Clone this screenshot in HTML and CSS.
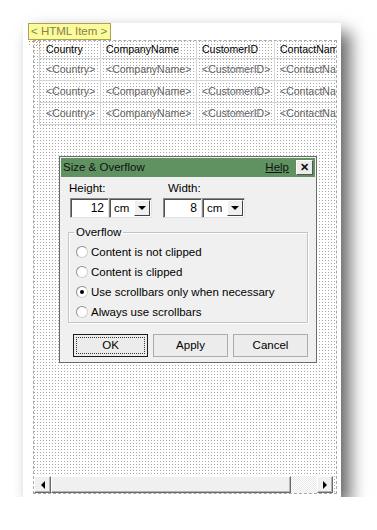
FILE: index.html
```html
<!DOCTYPE html>
<html>
<head>
<meta charset="utf-8">
<link rel="stylesheet" href="styles.css">
</head>
<body>
<div class="stage">
  <div class="card">
    <div class="tag">&lt; HTML Item &gt;</div>
    <svg class="handle" width="16" height="10" viewBox="0 0 16 10">
      <rect x="1" y="1" width="1" height="1"/><rect x="4" y="1" width="1" height="1"/><rect x="1" y="4" width="1" height="1"/>
      <rect x="8" y="2" width="1" height="1"/><rect x="11" y="2" width="1" height="1"/><rect x="11" y="5" width="1" height="1"/><rect x="11" y="8" width="1" height="1"/><rect x="8" y="5" width="1" height="1"/>
    </svg>
    <div class="frame">
      <table class="grid">
        <colgroup><col class="c1"><col class="c2"><col class="c3"><col class="c4"></colgroup>
        <tr class="head"><td>Country</td><td>CompanyName</td><td>CustomerID</td><td>ContactName</td></tr>
        <tr><td>&lt;Country&gt;</td><td>&lt;CompanyName&gt;</td><td>&lt;CustomerID&gt;</td><td>&lt;ContactName&gt;</td></tr>
        <tr><td>&lt;Country&gt;</td><td>&lt;CompanyName&gt;</td><td>&lt;CustomerID&gt;</td><td>&lt;ContactName&gt;</td></tr>
        <tr><td>&lt;Country&gt;</td><td>&lt;CompanyName&gt;</td><td>&lt;CustomerID&gt;</td><td>&lt;ContactName&gt;</td></tr>
      </table>

      <div class="dialog">
        <div class="titlebar">
          <span class="title">Size &amp; Overflow</span>
          <span class="help">Help</span>
          <span class="close">&#x2715;</span>
        </div>
        <div class="dbody">
          <div class="sizes">
            <div class="sgroup">
              <div class="lbl">Height:</div>
              <div class="ctrls">
                <div class="num">12</div>
                <div class="sel"><span>cm</span><span class="drop"><i></i></span></div>
              </div>
            </div>
            <div class="sgroup wgroup">
              <div class="lbl">Width:</div>
              <div class="ctrls">
                <div class="num">8</div>
                <div class="sel"><span>cm</span><span class="drop"><i></i></span></div>
              </div>
            </div>
          </div>
          <fieldset class="overflow">
            <legend>Overflow</legend>
            <div class="radio"><span class="dot"></span>Content is not clipped</div>
            <div class="radio"><span class="dot"></span>Content is clipped</div>
            <div class="radio"><span class="dot on"></span>Use scrollbars only when necessary</div>
            <div class="radio"><span class="dot"></span>Always use scrollbars</div>
          </fieldset>
          <div class="buttons">
            <div class="btn ok"><span>OK</span></div>
            <div class="btn">Apply</div>
            <div class="btn">Cancel</div>
          </div>
        </div>
      </div>

      <div class="hscroll">
        <div class="sbtn"><i class="al"></i></div>
        <div class="thumb"></div>
        <div class="trough"></div>
        <div class="sbtn r"><i class="ar"></i></div>
      </div>
    </div>
  </div>
</div>
</body>
</html>
```

FILE: styles.css
```css
* { box-sizing: border-box; }
body {
  margin: 0;
  background: #fff;
  font-family: "Liberation Sans", Arial, sans-serif;
}
.stage { padding: 23px 0 0 23px; }
.card {
  position: relative;
  width: 318px;
  height: 474px;
  background: #fff;
  box-shadow: 9px 9px 16px rgba(0,0,0,0.6);
  display: flex;
  flex-direction: column;
  padding: 0 4px 3px 10px;
}
.tag {
  align-self: flex-start;
  margin-left: -5px;
  height: 17px;
  padding: 0 3px 0 2px;
  background: #fbfb9c;
  border: 1px solid #a9a35a;
  color: #85824c;
  font-size: 11.5px;
  line-height: 15px;
}
.handle {
  position: absolute;
  left: 5px;
  top: 17px;
  fill: #e08a22;
}
.frame {
  flex: 1;
  display: flex;
  flex-direction: column;
  overflow: hidden;
  border: 1px dashed #a8a8a8;
  background-color: #fff;
  background-image: conic-gradient(from 270deg at 1px 1px, #a8a8a8 90deg, transparent 0);
  background-size: 3px 3px;
}
.grid {
  align-self: flex-start;
  flex-shrink: 0;
  margin-left: 5px;
  width: 345px;
  table-layout: fixed;
  border-collapse: collapse;
  font-size: 10.5px;
}
.c1 { width: 61px; }
.c2 { width: 96px; }
.c3 { width: 78px; }
.c4 { width: 110px; }
.grid td {
  border: 1px solid #d6d6d6;
  padding: 0 0 0 5px;
  white-space: nowrap;
  overflow: hidden;
  height: 22px;
  color: #636363;
}
.grid tr:first-child td { border-top: none; }
.grid .head td { height: 17px; color: #000; }
.grid td:first-child { padding-left: 6px; }

.dialog {
  align-self: flex-start;
  flex-shrink: 0;
  margin: 31px 0 0 25px;
  width: 258px;
  height: 207px;
  border: 1px solid #6a6a6a;
  background: #f0f0f0;
  padding: 1px;
  font-size: 11px;
  color: #000;
  display: flex;
  flex-direction: column;
}
.titlebar {
  height: 19px;
  background: #5f9161;
  display: flex;
  align-items: center;
  padding: 0 2px 0 2px;
  color: #111;
  font-size: 11.5px;
}
.title { flex: 1; }
.help { text-decoration: underline; margin-right: 7px; }
.close {
  width: 17px;
  height: 15px;
  background: #ececec;
  border: 1px solid #fff;
  border-right-color: #555;
  border-bottom-color: #555;
  display: flex;
  align-items: center;
  justify-content: center;
  font-size: 11px;
  font-weight: bold;
  line-height: 1;
}
.dbody {
  padding: 0 7px 0 7px;
  display: flex;
  flex-direction: column;
}
.sizes { display: flex; gap: 11px; margin-top: 5px; }
.lbl { line-height: 13px; padding-left: 1px; font-size: 11.5px; }
.wgroup .lbl { padding-left: 5px; }
.ctrls { display: flex; margin-top: 3px; margin-left: 2px; }
.wgroup .ctrls { margin-left: 0; }
.num {
  width: 39px;
  height: 20px;
  background: #fff;
  border: 1px solid;
  border-color: #8a8a8a #e2e2e2 #e2e2e2 #8a8a8a;
  box-shadow: inset 1px 1px 0 #505050;
  text-align: right;
  padding-right: 4px;
  font-size: 12px;
  line-height: 18px;
}
.sel {
  width: 43px;
  height: 20px;
  background: #fff;
  border: 1px solid;
  border-color: #8a8a8a #e2e2e2 #e2e2e2 #8a8a8a;
  box-shadow: inset 1px 1px 0 #505050;
  display: flex;
  align-items: center;
  justify-content: space-between;
  padding: 1px 1px 1px 4px;
  font-size: 11.5px;
}
.drop {
  width: 16px;
  height: 16px;
  background: #f0f0f0;
  border: 1px solid;
  border-color: #fff #404040 #404040 #fff;
  display: flex;
  align-items: center;
  justify-content: center;
}
.drop i {
  width: 0; height: 0;
  border-left: 4px solid transparent;
  border-right: 4px solid transparent;
  border-top: 4px solid #000;
}
.overflow {
  margin: 8px 0 0 0;
  padding: 3px 0 0 5px;
  border: 1px solid #c4c4c4;
  box-shadow: 1px 1px 0 #fff, inset 1px 1px 0 #fff;
  min-width: 0;
}
.overflow legend {
  padding: 0 2px;
  line-height: 13px;
  font-size: 11.5px;
}
.radio {
  height: 20px;
  display: flex;
  align-items: center;
  padding-left: 2px;
  font-size: 11.5px;
}
.dot {
  width: 12px;
  height: 12px;
  border-radius: 50%;
  background: #fff;
  border: 1px solid #8e8e8e;
  border-bottom-color: #d0d0d0;
  border-right-color: #d0d0d0;
  margin-right: 3px;
  display: flex;
  align-items: center;
  justify-content: center;
}
.dot.on::after {
  content: "";
  width: 4px;
  height: 4px;
  border-radius: 50%;
  background: #000;
}
.buttons {
  display: flex;
  gap: 5px;
  margin: 11px 0 0 5px;
}
.btn {
  width: 75px;
  height: 23px;
  border: 1px solid #acacac;
  background: #ececec;
  display: flex;
  align-items: center;
  justify-content: center;
  font-size: 11.5px;
}
.btn.ok {
  border: 1px solid #1a1a1a;
  padding: 2px;
}
.btn.ok span {
  flex: 1;
  align-self: stretch;
  border: 1px dotted #333;
  display: flex;
  align-items: center;
  justify-content: center;
}
.hscroll {
  margin-top: auto;
  height: 17px;
  display: flex;
  margin-right: 2px;
  flex-shrink: 0;
}
.sbtn, .thumb {
  background: #f0f0f0;
  border: 1px solid;
  border-color: #fff #6a6a6a #6a6a6a #fff;
  box-shadow: inset -1px -1px 0 #b4b4b4;
}
.sbtn {
  width: 17px;
  display: flex;
  align-items: center;
  justify-content: center;
}
.sbtn.r { width: 16px; }
.thumb { width: 240px; }
.trough {
  width: 26px;
  background-color: #fff;
  background-image: conic-gradient(#e8e8e8 25%, transparent 0 50%, #e8e8e8 0 75%, transparent 0);
  background-size: 2px 2px;
}
.al, .ar { width: 0; height: 0; border-top: 4px solid transparent; border-bottom: 4px solid transparent; }
.al { border-right: 4px solid #000; }
.ar { border-left: 4px solid #000; }
```
